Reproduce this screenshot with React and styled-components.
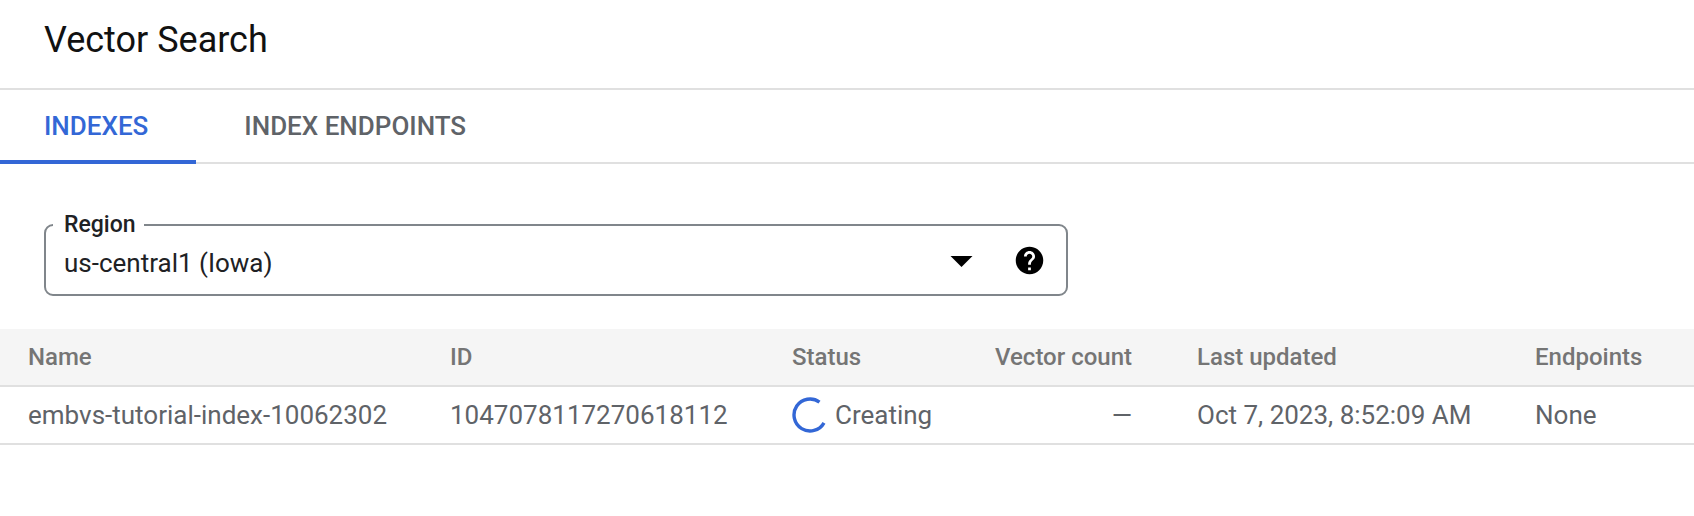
import React from "react"
import styled, { createGlobalStyle } from "styled-components"

const GlobalStyle = createGlobalStyle`
  html, body {
    margin: 0;
    background: #fff;
    font-family: Roboto, "Liberation Sans", sans-serif;
  }
`

const Page = styled.div`
  width: 1694px;
  height: 516px;
  overflow: hidden;
`

const Header = styled.header`
  height: 80px;
  display: flex;
  align-items: center;
  padding: 0 44px 8px;
  border-bottom: 2px solid #e0e0e0;
`

const Title = styled.h1`
  margin: 0;
  font-size: 36px;
  font-weight: 400;
  color: #111;
`

const Tabs = styled.nav`
  display: flex;
  height: 72px;
  border-bottom: 2px solid #e0e0e0;
`

const Tab = styled.a`
  display: flex;
  align-items: center;
  padding: 2px 48px 0 ${(props) => (props.$active ? "44px" : "48px")};
  margin-bottom: -2px;
  font-size: 26px;
  font-weight: 500;
  color: ${(props) => (props.$active ? "#3367d6" : "#5f6368")};
  border-bottom: 4px solid ${(props) => (props.$active ? "#3367d6" : "transparent")};
`

const Filter = styled.section`
  padding: 47px 0 33px 44px;
`

const Field = styled.fieldset`
  width: 1024px;
  height: 85px;
  box-sizing: border-box;
  margin: 0;
  padding: 0 20px 6px 18px;
  display: flex;
  align-items: center;
  border: 2px solid #80868b;
  border-radius: 9px;
`

const FieldLabel = styled.legend`
  margin-left: -11px;
  padding: 0 8px 0 11px;
  font-size: 23px;
  font-weight: 500;
  color: #202124;
`

const FieldValue = styled.span`
  flex: 1;
  font-size: 26px;
  color: #202124;
`

const Caret = styled.svg`
  width: 23px;
  height: 11px;
  margin: 0 40px 4px 0;
`

const Help = styled.svg`
  width: 33px;
  height: 33px;
  margin-bottom: 5px;
`

const Row = styled.div`
  display: grid;
  grid-template-columns: 422px 342px 200px 205px 338px 1fr;
  padding-left: 28px;
  align-items: center;
  border-bottom: 2px solid #e0e0e0;
  height: 56px;
  background: ${(props) => (props.$head ? "#f5f5f5" : "#fff")};
`

const Cell = styled.div`
  font-size: ${(props) => (props.$head ? "24px" : "26px")};
  font-weight: ${(props) => (props.$head ? 500 : 400)};
  color: ${(props) => (props.$head ? "#757575" : "#5f6368")};
  white-space: nowrap;
  display: flex;
  align-items: center;
  gap: 7px;
  ${(props) => props.$right && "justify-content: flex-end; padding-right: 65px;"}
`

const Spinner = () => (
  <svg width="36" height="36" viewBox="0 0 36 36" fill="none">
    <path
      d="M27.5 5.1A16 16 0 1 0 32 25.8"
      stroke="#3367d6"
      strokeWidth="3.4"
    />
  </svg>
)

const columns = ["Name", "ID", "Status", "Vector count", "Last updated", "Endpoints"]

export default function App() {
  return (
    <Page>
      <GlobalStyle />
      <Header>
        <Title>Vector Search</Title>
      </Header>
      <Tabs>
        <Tab $active>INDEXES</Tab>
        <Tab>INDEX ENDPOINTS</Tab>
      </Tabs>
      <Filter>
        <Field>
          <FieldLabel>Region</FieldLabel>
          <FieldValue>us-central1 (Iowa)</FieldValue>
          <Caret viewBox="0 0 22 11">
            <path d="M0 0h22L11 11z" fill="#000" />
          </Caret>
          <Help viewBox="0 0 24 24">
            <path
              d="M12 2C6.48 2 2 6.48 2 12s4.48 10 10 10 10-4.48 10-10S17.52 2 12 2zm1 17h-2v-2h2v2zm2.07-7.75l-.9.92C13.45 12.9 13 13.5 13 15h-2v-.5c0-1.1.45-2.1 1.17-2.83l1.24-1.26c.37-.36.59-.86.59-1.41 0-1.1-.9-2-2-2s-2 .9-2 2H8c0-2.21 1.79-4 4-4s4 1.79 4 4c0 .88-.36 1.68-.93 2.25z"
              fill="#000"
            />
          </Help>
        </Field>
      </Filter>
      <Row $head>
        {columns.map((col) => (
          <Cell key={col} $head $right={col === "Vector count"}>
            {col}
          </Cell>
        ))}
      </Row>
      <Row>
        <Cell>embvs-tutorial-index-10062302</Cell>
        <Cell>1047078117270618112</Cell>
        <Cell>
          <Spinner />
          Creating
        </Cell>
        <Cell $right>—</Cell>
        <Cell>Oct 7, 2023, 8:52:09 AM</Cell>
        <Cell>None</Cell>
      </Row>
    </Page>
  )
}
